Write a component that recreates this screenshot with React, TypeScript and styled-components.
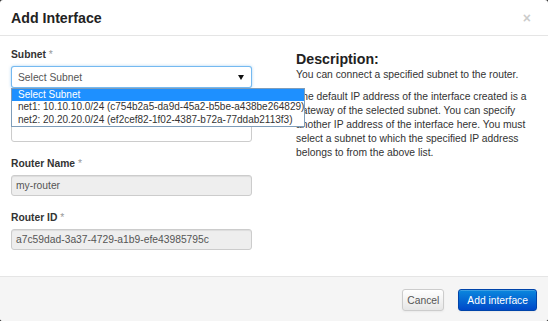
import React from "react";
import styled, { createGlobalStyle } from "styled-components";

const GlobalStyle = createGlobalStyle`
  html, body {
    margin: 0;
    padding: 0;
    background: #2b2b2b;
  }
  body {
    font-family: "Liberation Sans", Arial, sans-serif;
    color: #333;
  }
`;

const Modal = styled.div`
  width: 548px;
  height: 321px;
  background: #fff;
  border-radius: 3px;
  overflow: hidden;
  display: flex;
  flex-direction: column;
`;

const Header = styled.header`
  height: 35px;
  border-bottom: 1px solid #e5e5e5;
  padding: 0 11px;
  display: flex;
  align-items: center;
  justify-content: space-between;
`;

const Title = styled.h3`
  margin: 0;
  font-size: 14.2px;
  font-weight: bold;
  color: #222;
`;

const Close = styled.span`
  font-size: 14px;
  font-weight: bold;
  color: #000;
  opacity: 0.2;
  margin-right: 6px;
  line-height: 1;
`;

const Body = styled.div`
  flex: 1;
  padding: 12px 11px 0;
  display: flex;
  gap: 44px;
`;

const LeftColumn = styled.div`
  width: 241px;
  flex-shrink: 0;
`;

const Field = styled.div`
  position: relative;
  margin-bottom: 15px;
`;

const Label = styled.label`
  display: block;
  height: 14px;
  font-size: 10.3px;
  font-weight: bold;
  line-height: 14px;
  margin-bottom: 4px;
  color: #333;
`;

const Required = styled.span`
  color: #999;
  font-weight: normal;
`;

const Input = styled.div<{ $readOnly?: boolean }>`
  box-sizing: border-box;
  height: 21px;
  border: 1px solid #ccc;
  border-radius: 3px;
  background: ${(p) => (p.$readOnly ? "#eee" : "#fff")};
  box-shadow: inset 0 1px 1px rgba(0, 0, 0, 0.075);
  padding: 0 4px;
  display: flex;
  align-items: center;
  font-size: 10.3px;
  color: #555;
`;

const Select = styled.div`
  box-sizing: border-box;
  height: 22px;
  border: 1px solid rgba(82, 168, 236, 0.8);
  border-radius: 3px;
  box-shadow: 0 0 3px rgba(82, 168, 236, 0.5);
  background: #fff;
  padding: 0 7px 0 6px;
  display: flex;
  align-items: center;
  justify-content: space-between;
  font-size: 10.3px;
  color: #555;
`;

const Arrow = styled.span`
  width: 0;
  height: 0;
  border-left: 3px solid transparent;
  border-right: 3px solid transparent;
  border-top: 5px solid #111;
`;

const Dropdown = styled.ul`
  position: absolute;
  left: 0;
  top: 40px;
  width: 294px;
  box-sizing: border-box;
  margin: 0;
  padding: 0;
  list-style: none;
  background: #fff;
  border: 1px solid #7f9db9;
  z-index: 2;
`;

const Option = styled.li<{ $selected?: boolean }>`
  font-size: 10px;
  line-height: 12.4px;
  padding-left: 6px;
  white-space: nowrap;
  background: ${(p) => (p.$selected ? "#1e90ff" : "transparent")};
  color: ${(p) => (p.$selected ? "#fff" : "#333")};
`;

const RightColumn = styled.div`
  flex: 1;
`;

const DescTitle = styled.h4`
  margin: 3px 0 0;
  font-size: 14.2px;
  line-height: 17px;
  font-weight: bold;
  color: #222;
`;

const DescText = styled.p`
  margin: 0 0 7.4px;
  font-size: 10.3px;
  line-height: 14.2px;
  color: #333;
`;

const Footer = styled.footer`
  height: 45px;
  box-sizing: border-box;
  border-top: 1px solid #e5e5e5;
  background: #f5f5f5;
  padding: 12px 11px 0;
  display: flex;
  justify-content: flex-end;
  align-items: flex-start;
  gap: 14px;
`;

const Button = styled.button<{ $primary?: boolean }>`
  height: 22px;
  box-sizing: border-box;
  font-family: "Liberation Sans", Arial, sans-serif;
  font-size: 10.3px;
  border-radius: 3px;
  padding: ${(p) => (p.$primary ? "0 8px" : "0 4px")};
  border: 1px solid ${(p) => (p.$primary ? "#0044aa" : "#ccc")};
  color: ${(p) => (p.$primary ? "#fff" : "#555")};
  background: ${(p) =>
    p.$primary
      ? "linear-gradient(#0a88de, #0048c9)"
      : "linear-gradient(#ffffff, #e6e6e6)"};
  box-shadow: inset 0 1px 0 rgba(255, 255, 255, 0.2), 0 1px 2px rgba(0, 0, 0, 0.05);
`;

const subnets = [
  "Select Subnet",
  "net1: 10.10.10.0/24 (c754b2a5-da9d-45a2-b5be-a438be264829)",
  "net2: 20.20.20.0/24 (ef2cef82-1f02-4387-b72a-77ddab2113f3)",
];

const App = (): JSX.Element => (
  <>
    <GlobalStyle />
    <Modal>
      <Header>
        <Title>Add Interface</Title>
        <Close>×</Close>
      </Header>
      <Body>
        <LeftColumn>
          <Field>
            <Label>
              Subnet <Required>*</Required>
            </Label>
            <Select>
              Select Subnet
              <Arrow />
            </Select>
            <Dropdown>
              {subnets.map((s, i) => (
                <Option key={s} $selected={i === 0}>
                  {s}
                </Option>
              ))}
            </Dropdown>
          </Field>
          {/* IP address field, its label hidden under the open dropdown */}
          <Field>
            <Label />
            <Input />
          </Field>
          <Field>
            <Label>
              Router Name <Required>*</Required>
            </Label>
            <Input $readOnly>my-router</Input>
          </Field>
          <Field>
            <Label>
              Router ID <Required>*</Required>
            </Label>
            <Input $readOnly>a7c59dad-3a37-4729-a1b9-efe43985795c</Input>
          </Field>
        </LeftColumn>
        <RightColumn>
          <DescTitle>Description:</DescTitle>
          <DescText>You can connect a specified subnet to the router.</DescText>
          <DescText>
            The default IP address of the interface created is a gateway of the
            selected subnet. You can specify another IP address of the interface
            here. You must select a subnet to which the specified IP address
            belongs to from the above list.
          </DescText>
        </RightColumn>
      </Body>
      <Footer>
        <Button>Cancel</Button>
        <Button $primary>Add interface</Button>
      </Footer>
    </Modal>
  </>
);

export default App;
